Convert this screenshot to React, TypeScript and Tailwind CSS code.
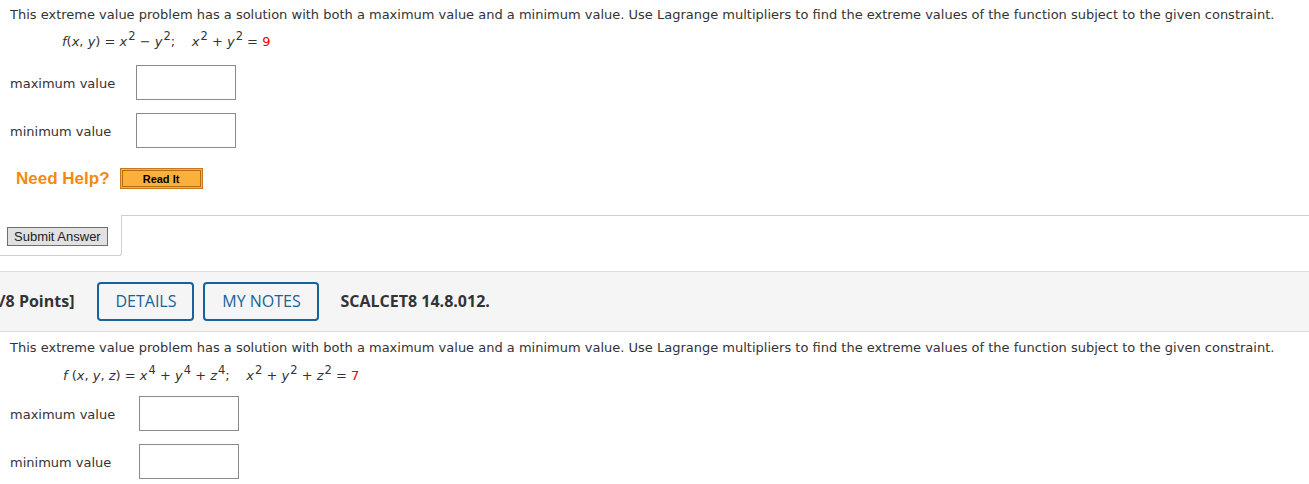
const sans = "font-['DejaVu_Sans',Verdana,sans-serif]";

function Sup({ children }: { children: React.ReactNode }) {
  return <sup className="relative -top-[6px] pl-[1px] text-[11.5px] leading-none">{children}</sup>;
}

function AnswerRow({ label, labelW }: { label: string; labelW: string }) {
  return (
    <div className="flex h-[48px] items-center">
      <span className={`pl-[10px] pt-[3px] ${labelW}`}>{label}</span>
      <div className="h-[35px] w-[100px] border border-[#8a8a8a] bg-white" />
    </div>
  );
}

export default function App() {
  return (
    <div className={`relative w-[1309px] h-[484px] overflow-hidden bg-white text-[13px] text-[#333] ${sans}`}>
      {/* question one */}
      <p className="pl-[10px] pt-[7px] leading-[16px]">
        This extreme value problem has a solution with both a maximum value and a minimum value. Use Lagrange multipliers to find the extreme values of the function subject to the given constraint.
      </p>
      <p className="pl-[62px] pt-[11px] leading-[16px]">
        <i>f</i>(<i>x</i>, <i>y</i>) = <i>x</i><Sup>2</Sup> − <i>y</i><Sup>2</Sup>;&nbsp;&nbsp;&nbsp; <i>x</i><Sup>2</Sup> + <i>y</i><Sup>2</Sup> = <span className="text-[#e00]">9</span>
      </p>
      <div className="mt-[8px]">
        <AnswerRow label="maximum value" labelW="w-[136px]" />
        <AnswerRow label="minimum value" labelW="w-[136px]" />
      </div>

      <div className="mt-[12px] flex items-center pl-[16px]">
        <span className="font-['Liberation_Sans',Arial,sans-serif] text-[17px] font-bold text-[#f28a12]">Need Help?</span>
        <button className="ml-[10px] h-[21px] w-[83px] border border-[#c7771c] bg-[#fbb03b] p-[1px]">
          <span className="flex h-full w-full items-center justify-center border border-[#b86b10] font-['Liberation_Sans',Arial,sans-serif] text-[11px] font-bold text-black">
            Read It
          </span>
        </button>
      </div>

      {/* submit */}
      <div className="mt-[23px] flex">
        <div className="flex h-[41px] w-[122px] items-center rounded-br-[3px] border-r border-b border-[#cfcfcf] pl-[7px] pt-[4px]">
          <button className="h-[19px] border border-[#6f6f6f] bg-[#e1e1e1] px-[6px] font-['Liberation_Sans',Arial,sans-serif] text-[13px] leading-[16px] text-[#222]">
            Submit Answer
          </button>
        </div>
        <div className="flex-1 border-t border-[#cfcfcf]" />
      </div>

      {/* header bar */}
      <div className="mt-[15px] flex h-[61px] items-center border-y border-[#dedede] bg-[#f5f5f5] font-['Open_Sans',sans-serif] text-[16px]">
        <span className="-ml-[1px] font-bold text-[#333]">/8 Points]</span>
        <button className="ml-[23px] h-[39px] w-[97px] rounded-[4px] border-2 border-[#18629c] font-medium text-[#18629c]">DETAILS</button>
        <button className="ml-[9px] h-[39px] w-[116px] rounded-[4px] border-2 border-[#18629c] font-medium text-[#18629c]">MY NOTES</button>
        <span className="ml-[21px] font-bold text-[#333]">SCALCET8 14.8.012.</span>
      </div>

      {/* question two */}
      <p className="pl-[10px] pt-[8px] leading-[16px]">
        This extreme value problem has a solution with both a maximum value and a minimum value. Use Lagrange multipliers to find the extreme values of the function subject to the given constraint.
      </p>
      <p className="pl-[63px] pt-[12px] leading-[16px]">
        <i>f</i> (<i>x</i>, <i>y</i>, <i>z</i>) = <i>x</i><Sup>4</Sup> + <i>y</i><Sup>4</Sup> + <i>z</i><Sup>4</Sup>;&nbsp;&nbsp;&nbsp; <i>x</i><Sup>2</Sup> + <i>y</i><Sup>2</Sup> + <i>z</i><Sup>2</Sup> = <span className="text-[#e00]">7</span>
      </p>
      <div className="mt-[6px]">
        <AnswerRow label="maximum value" labelW="w-[139px]" />
        <AnswerRow label="minimum value" labelW="w-[139px]" />
      </div>
    </div>
  );
}
